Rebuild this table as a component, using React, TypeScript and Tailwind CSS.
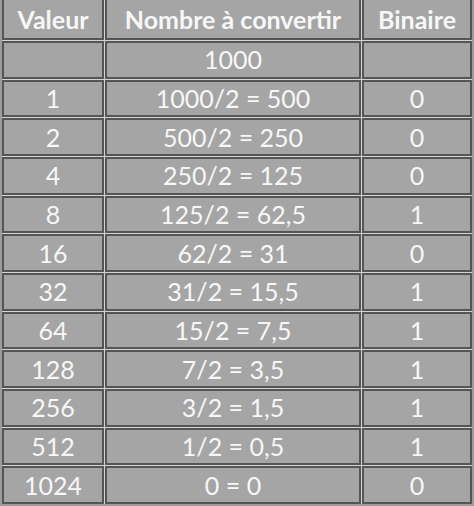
import React from "react";

const rows: [string, string, string][] = [
  ["", "1000", ""],
  ["1", "1000/2 = 500", "0"],
  ["2", "500/2 = 250", "0"],
  ["4", "250/2 = 125", "0"],
  ["8", "125/2 = 62,5", "1"],
  ["16", "62/2 = 31", "0"],
  ["32", "31/2 = 15,5", "1"],
  ["64", "15/2 = 7,5", "1"],
  ["128", "7/2 = 3,5", "1"],
  ["256", "3/2 = 1,5", "1"],
  ["512", "1/2 = 0,5", "1"],
  ["1024", "0 = 0", "0"],
];

const cell =
  "flex items-center justify-center bg-[#a5a5a5] border-2 border-[#555555] text-[#f7f7f7] leading-none";

const App = () => {
  return (
    <div className="w-[474px] h-[506px] overflow-hidden bg-[#9c9c9c] font-['Lato','Open_Sans',sans-serif]">
      <div className="ml-[2px] -mt-[2px] w-[470px] grid grid-cols-[102px_256px_110px] gap-px bg-[#d2d2d2] text-[25px]">
        <div className={`${cell} h-[42px] font-bold`}>Valeur</div>
        <div className={`${cell} h-[42px] font-bold`}>Nombre à convertir</div>
        <div className={`${cell} h-[42px] font-bold`}>Binaire</div>
        {rows.map((r, i) => (
          <React.Fragment key={i}>
            <div className={`${cell} h-[37.67px]`}>{r[0]}</div>
            <div className={`${cell} h-[37.67px]`}>{r[1]}</div>
            <div className={`${cell} h-[37.67px]`}>{r[2]}</div>
          </React.Fragment>
        ))}
      </div>
    </div>
  );
};

export default App;
